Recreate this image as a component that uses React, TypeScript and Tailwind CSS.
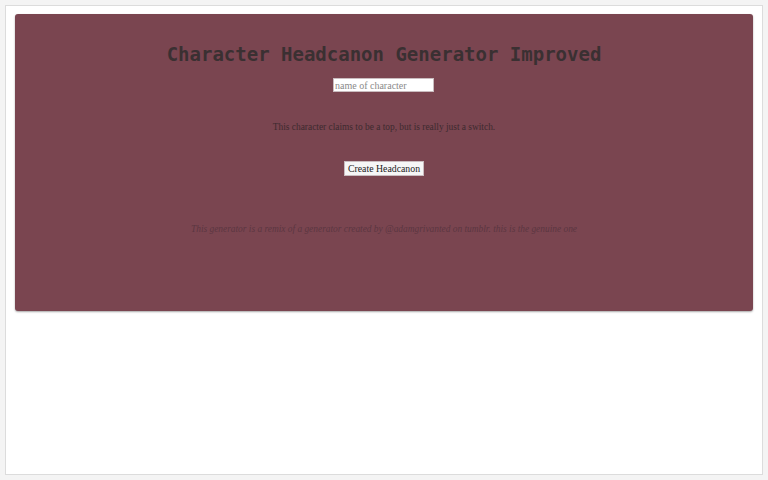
export default function App() {
  return (
    <div className="min-h-[480px] w-[768px] bg-[#f4f4f4] p-[5px] pb-[5px]">
      <div className="h-[470px] border border-[#dcdcdc] bg-white px-[9px] pt-[8px]">
        <div className="flex h-[297px] flex-col items-center rounded-[3px] bg-[#7a4550] shadow-[0_1px_2px_rgba(0,0,0,0.35)]">
          <h1 className="mt-[29px] font-['DejaVu_Sans_Mono',monospace] text-[19px] font-bold leading-[22px] text-[#3a3032]">
            Character Headcanon Generator Improved
          </h1>
          <input
            type="text"
            placeholder="name of character"
            className="mt-[13px] ml-[-1px] h-[14px] w-[101px] border border-[#c9bcbf] bg-white px-[1px] font-['Liberation_Serif',serif] text-[10px] leading-[12px] text-black outline-none placeholder:text-[#8a8a8a]"
          />
          <p className="mt-[29px] font-['Liberation_Serif',serif] text-[9.4px] leading-[12px] text-[#3d2a2f]">
            This character claims to be a top, but is really just a switch.
          </p>
          <button className="mt-[28px] h-[15px] border border-[#c9bcbf] bg-[#f6f6f6] px-[3px] font-['Liberation_Serif',serif] text-[9.8px] leading-[12px] text-[#222]">
            Create Headcanon
          </button>
          <p className="mt-[47px] font-['Liberation_Serif',serif] text-[9.4px] italic leading-[12px] text-[#5a3641]">
            This generator is a remix of a generator created by @adamgrivanted on tumblr. this is the genuine one
          </p>
        </div>
      </div>
    </div>
  );
}
